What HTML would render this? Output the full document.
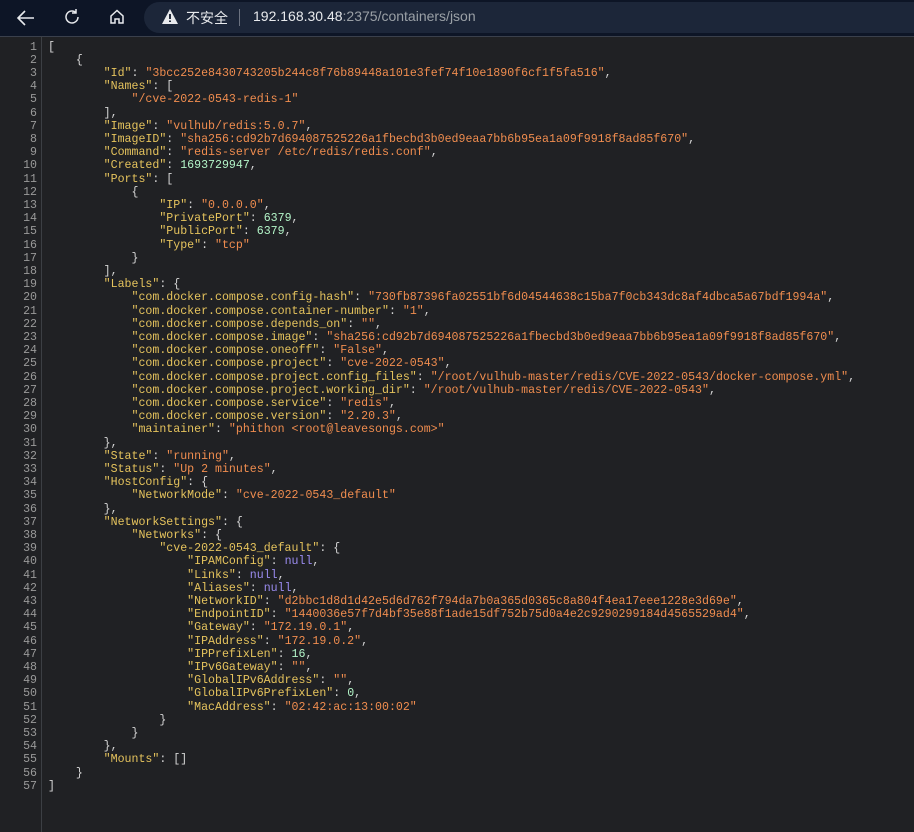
<!DOCTYPE html>
<html><head><meta charset="utf-8"><style>
html,body{margin:0;padding:0;width:914px;height:832px;overflow:hidden;background:#202124;}
.top{position:absolute;left:0;top:0;width:914px;height:36px;background:#0d1526;border-bottom:1px solid #3a404c;}
.pill{position:absolute;left:144px;top:2px;width:790px;height:31px;border-radius:16px;background:#1c2639;}
.url{position:absolute;left:253px;top:8px;font:14px "Liberation Sans",sans-serif;color:#e8eaed;}
.url span{color:#9aa0a6}
.warn{position:absolute;left:186px;top:8px;font:14px "Liberation Sans","Noto Sans CJK SC",sans-serif;color:#e8eaed;}
.sep{position:absolute;left:239px;top:9px;width:1px;height:17px;background:#6b7280;}
.gut{position:absolute;left:0;top:36px;width:41px;height:796px;border-right:1px solid #3c3f44;}
pre{margin:0;position:absolute;top:40.5px;font:11.6px/13.2px "Liberation Mono",monospace;color:#d4d4d4;}
.ln{left:0;width:37px;text-align:right;color:#9a9a9a;}
.cd{left:48px;}
.k{color:#e5c35d}.s{color:#f08d4f}.n{color:#b3f5c8}.u{color:#9b8cf0}
</style></head><body>
<div class="top">
<svg style="position:absolute;left:16px;top:9px" width="20" height="18" viewBox="0 0 20 18"><path d="M18 9H3M9 2L2 9l7 7" stroke="#e8eaed" stroke-width="1.6" fill="none"/></svg>
<svg style="position:absolute;left:63px;top:8px" width="18" height="18" viewBox="0 0 18 18"><path d="M15 9a6 6 0 1 1-2-4.5M13 1v4h-4" stroke="#e8eaed" stroke-width="1.5" fill="none"/></svg>
<svg style="position:absolute;left:108px;top:8px" width="18" height="18" viewBox="0 0 18 18"><path d="M3 8L9 2.5 15 8v7h-4v-4H7v4H3z" stroke="#e8eaed" stroke-width="1.5" fill="none"/></svg>
<div class="pill"></div>
<svg style="position:absolute;left:161px;top:8px" width="18" height="17" viewBox="0 0 18 17"><path d="M9 1L17 16H1z" fill="#e8eaed"/><path d="M9 6v5M9 12.5v1.5" stroke="#0d1526" stroke-width="1.8"/></svg>
<div class="warn">不安全</div><div class="sep"></div>
<div class="url">192.168.30.48<span>:2375/containers/json</span></div>
</div>
<div class="gut"></div>
<pre class="ln">1
2
3
4
5
6
7
8
9
10
11
12
13
14
15
16
17
18
19
20
21
22
23
24
25
26
27
28
29
30
31
32
33
34
35
36
37
38
39
40
41
42
43
44
45
46
47
48
49
50
51
52
53
54
55
56
57</pre>
<pre class="cd">[
    {
        <span class="k">"Id"</span>: <span class="s">"3bcc252e8430743205b244c8f76b89448a101e3fef74f10e1890f6cf1f5fa516"</span>,
        <span class="k">"Names"</span>: [
            <span class="s">"/cve-2022-0543-redis-1"</span>
        ],
        <span class="k">"Image"</span>: <span class="s">"vulhub/redis:5.0.7"</span>,
        <span class="k">"ImageID"</span>: <span class="s">"sha256:cd92b7d694087525226a1fbecbd3b0ed9eaa7bb6b95ea1a09f9918f8ad85f670"</span>,
        <span class="k">"Command"</span>: <span class="s">"redis-server /etc/redis/redis.conf"</span>,
        <span class="k">"Created"</span>: <span class="n">1693729947</span>,
        <span class="k">"Ports"</span>: [
            {
                <span class="k">"IP"</span>: <span class="s">"0.0.0.0"</span>,
                <span class="k">"PrivatePort"</span>: <span class="n">6379</span>,
                <span class="k">"PublicPort"</span>: <span class="n">6379</span>,
                <span class="k">"Type"</span>: <span class="s">"tcp"</span>
            }
        ],
        <span class="k">"Labels"</span>: {
            <span class="k">"com.docker.compose.config-hash"</span>: <span class="s">"730fb87396fa02551bf6d04544638c15ba7f0cb343dc8af4dbca5a67bdf1994a"</span>,
            <span class="k">"com.docker.compose.container-number"</span>: <span class="s">"1"</span>,
            <span class="k">"com.docker.compose.depends_on"</span>: <span class="s">""</span>,
            <span class="k">"com.docker.compose.image"</span>: <span class="s">"sha256:cd92b7d694087525226a1fbecbd3b0ed9eaa7bb6b95ea1a09f9918f8ad85f670"</span>,
            <span class="k">"com.docker.compose.oneoff"</span>: <span class="s">"False"</span>,
            <span class="k">"com.docker.compose.project"</span>: <span class="s">"cve-2022-0543"</span>,
            <span class="k">"com.docker.compose.project.config_files"</span>: <span class="s">"/root/vulhub-master/redis/CVE-2022-0543/docker-compose.yml"</span>,
            <span class="k">"com.docker.compose.project.working_dir"</span>: <span class="s">"/root/vulhub-master/redis/CVE-2022-0543"</span>,
            <span class="k">"com.docker.compose.service"</span>: <span class="s">"redis"</span>,
            <span class="k">"com.docker.compose.version"</span>: <span class="s">"2.20.3"</span>,
            <span class="k">"maintainer"</span>: <span class="s">"phithon &lt;root@leavesongs.com&gt;"</span>
        },
        <span class="k">"State"</span>: <span class="s">"running"</span>,
        <span class="k">"Status"</span>: <span class="s">"Up 2 minutes"</span>,
        <span class="k">"HostConfig"</span>: {
            <span class="k">"NetworkMode"</span>: <span class="s">"cve-2022-0543_default"</span>
        },
        <span class="k">"NetworkSettings"</span>: {
            <span class="k">"Networks"</span>: {
                <span class="k">"cve-2022-0543_default"</span>: {
                    <span class="k">"IPAMConfig"</span>: <span class="u">null</span>,
                    <span class="k">"Links"</span>: <span class="u">null</span>,
                    <span class="k">"Aliases"</span>: <span class="u">null</span>,
                    <span class="k">"NetworkID"</span>: <span class="s">"d2bbc1d8d1d42e5d6d762f794da7b0a365d0365c8a804f4ea17eee1228e3d69e"</span>,
                    <span class="k">"EndpointID"</span>: <span class="s">"1440036e57f7d4bf35e88f1ade15df752b75d0a4e2c9290299184d4565529ad4"</span>,
                    <span class="k">"Gateway"</span>: <span class="s">"172.19.0.1"</span>,
                    <span class="k">"IPAddress"</span>: <span class="s">"172.19.0.2"</span>,
                    <span class="k">"IPPrefixLen"</span>: <span class="n">16</span>,
                    <span class="k">"IPv6Gateway"</span>: <span class="s">""</span>,
                    <span class="k">"GlobalIPv6Address"</span>: <span class="s">""</span>,
                    <span class="k">"GlobalIPv6PrefixLen"</span>: <span class="n">0</span>,
                    <span class="k">"MacAddress"</span>: <span class="s">"02:42:ac:13:00:02"</span>
                }
            }
        },
        <span class="k">"Mounts"</span>: []
    }
]</pre>
</body></html>
